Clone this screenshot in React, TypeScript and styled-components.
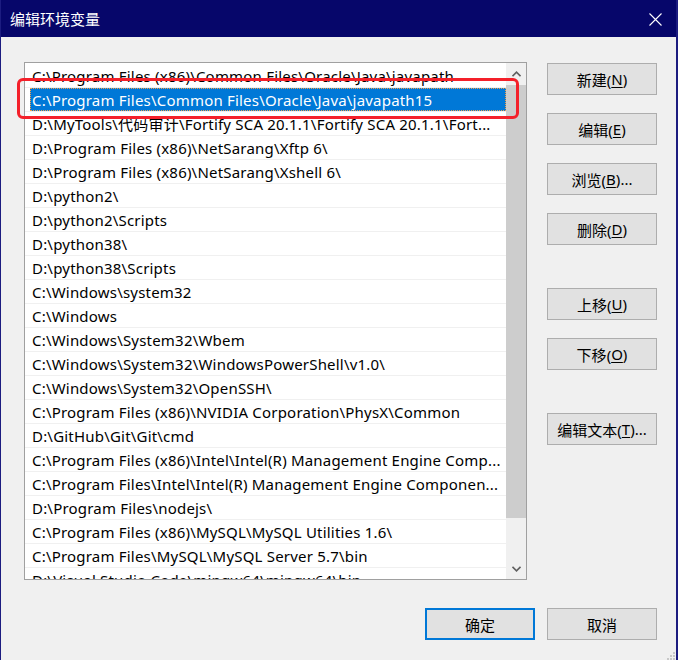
import React from "react";
import styled, { createGlobalStyle } from "styled-components";

const GlobalStyle = createGlobalStyle`
  html, body {
    margin: 0;
    padding: 0;
    background: #f0f0f0;
  }
  * {
    box-sizing: border-box;
  }
`;

const FONT = `"Noto Sans", "Noto Sans CJK SC", sans-serif`;

const paths = [
  "C:\\Program Files (x86)\\Common Files\\Oracle\\Java\\javapath",
  "C:\\Program Files\\Common Files\\Oracle\\Java\\javapath15",
  "D:\\MyTools\\代码审计\\Fortify SCA 20.1.1\\Fortify SCA 20.1.1\\Fort...",
  "D:\\Program Files (x86)\\NetSarang\\Xftp 6\\",
  "D:\\Program Files (x86)\\NetSarang\\Xshell 6\\",
  "D:\\python2\\",
  "D:\\python2\\Scripts",
  "D:\\python38\\",
  "D:\\python38\\Scripts",
  "C:\\Windows\\system32",
  "C:\\Windows",
  "C:\\Windows\\System32\\Wbem",
  "C:\\Windows\\System32\\WindowsPowerShell\\v1.0\\",
  "C:\\Windows\\System32\\OpenSSH\\",
  "C:\\Program Files (x86)\\NVIDIA Corporation\\PhysX\\Common",
  "D:\\GitHub\\Git\\Git\\cmd",
  "C:\\Program Files (x86)\\Intel\\Intel(R) Management Engine Comp...",
  "C:\\Program Files\\Intel\\Intel(R) Management Engine Componen...",
  "D:\\Program Files\\nodejs\\",
  "C:\\Program Files (x86)\\MySQL\\MySQL Utilities 1.6\\",
  "C:\\Program Files\\MySQL\\MySQL Server 5.7\\bin",
  "D:\\Visual Studio Code\\mingw64\\mingw64\\bin",
];

const SELECTED = 1;

const sideButtons = [
  { label: "新建", key: "N", gap: 0 },
  { label: "编辑", key: "E", gap: 18 },
  { label: "浏览", key: "B", gap: 18, dots: true },
  { label: "删除", key: "D", gap: 18 },
  { label: "上移", key: "U", gap: 43 },
  { label: "下移", key: "O", gap: 18 },
  { label: "编辑文本", key: "T", gap: 43, dots: true },
];

const Window = styled.div`
  position: relative;
  width: 678px;
  height: 660px;
  display: flex;
  flex-direction: column;
  background: #f0f0f0;
  border-left: 1px solid #1c1c80;
  border-right: 2px solid #1c1c80;
  font-family: ${FONT};
  overflow: hidden;
`;

const TitleBar = styled.div`
  height: 37px;
  flex: none;
  display: flex;
  align-items: center;
  justify-content: space-between;
  padding: 0 14px 0 9px;
  background: #06066a;
  color: #ffffff;
  font-size: 15px;
`;

const CloseIcon = styled.svg`
  width: 13px;
  height: 13px;
  margin-top: 1px;
`;

const Body = styled.div`
  display: flex;
  gap: 20px;
  padding: 25px 0 0 23px;
`;

const ListBox = styled.div`
  width: 503px;
  height: 518px;
  flex: none;
  display: flex;
  border: 1px solid #a0a0a0;
  background: #ffffff;
`;

const Rows = styled.div`
  flex: 1;
  overflow: hidden;
  padding-top: 1px;
`;

const Row = styled.div`
  height: 24px;
  display: flex;
  align-items: stretch;
  padding: 0 0 0 5px;
  border-bottom: 1px solid #f0f0f0;
`;

const Label = styled.div<{ $selected?: boolean }>`
  flex: 1;
  display: flex;
  align-items: center;
  padding-left: 2px;
  font-size: 15px;
  letter-spacing: 0.2px;
  white-space: nowrap;
  overflow: hidden;
  color: ${(p) => (p.$selected ? "#ffffff" : "#000000")};
  background: ${(p) => (p.$selected ? "#0078d7" : "transparent")};
  outline: ${(p) => (p.$selected ? "1px dotted #f5a04a" : "none")};
  outline-offset: -1px;
`;

const ScrollBar = styled.div`
  width: 20px;
  flex: none;
  display: flex;
  flex-direction: column;
  background: #f0f0f0;
`;

const Arrow = styled.div`
  height: 21px;
  flex: none;
  display: flex;
  align-items: center;
  justify-content: center;
`;

const Track = styled.div`
  flex: 1;
  padding-top: 1px;
`;

const Thumb = styled.div`
  height: 433px;
  background: #cdcdcd;
`;

const ButtonColumn = styled.div`
  display: flex;
  flex-direction: column;
  padding-top: 1px;
`;

const Button = styled.button<{ $gap?: number; $default?: boolean }>`
  width: 110px;
  height: 32px;
  margin-top: ${(p) => p.$gap ?? 0}px;
  display: flex;
  align-items: center;
  justify-content: center;
  padding: 0;
  background: #e1e1e1;
  border: ${(p) => (p.$default ? "2px solid #0078d7" : "1px solid #adadad")};
  border-radius: 0;
  font-family: ${FONT};
  font-size: 15px;
  color: #000000;
`;

const Mnemonic = styled.span`
  text-decoration: underline;
  text-underline-offset: 2px;
`;

const Footer = styled.div`
  display: flex;
  justify-content: flex-end;
  gap: 12px;
  padding: 28px 19px 0 0;
`;

const Annotation = styled.div`
  position: absolute;
  left: 16px;
  top: 78px;
  width: 502px;
  height: 41px;
  border: 3px solid #f4202a;
  border-radius: 6px;
  pointer-events: none;
`;

const Grip = styled.svg`
  position: absolute;
  right: 1px;
  bottom: 0;
  width: 10px;
  height: 10px;
`;

const Chevron: React.FC<{ down?: boolean }> = ({ down }) => (
  <svg width="9" height="6" viewBox="0 0 9 6">
    <polyline
      points={down ? "0.5,0.8 4.5,4.8 8.5,0.8" : "0.5,5.2 4.5,1.2 8.5,5.2"}
      fill="none"
      stroke="#606060"
      strokeWidth="1.6"
    />
  </svg>
);

export default function App() {
  return (
    <>
      <GlobalStyle />
      <Window>
        <TitleBar>
          <span>编辑环境变量</span>
          <CloseIcon viewBox="0 0 13 13">
            <path d="M0.5 0.5 L12.5 12.5 M12.5 0.5 L0.5 12.5" stroke="#ffffff" strokeWidth="1.1" />
          </CloseIcon>
        </TitleBar>
        <Body>
          <ListBox>
            <Rows>
              {paths.map((p, i) => (
                <Row key={i}>
                  <Label $selected={i === SELECTED}>{p}</Label>
                </Row>
              ))}
            </Rows>
            <ScrollBar>
              <Arrow>
                <Chevron />
              </Arrow>
              <Track>
                <Thumb />
              </Track>
              <Arrow>
                <Chevron down />
              </Arrow>
            </ScrollBar>
          </ListBox>
          <ButtonColumn>
            {sideButtons.map((b) => (
              <Button key={b.key} $gap={b.gap}>
                {b.label}(<Mnemonic>{b.key}</Mnemonic>){b.dots ? "..." : ""}
              </Button>
            ))}
          </ButtonColumn>
        </Body>
        <Footer>
          <Button $default>确定</Button>
          <Button>取消</Button>
        </Footer>
        <Annotation />
        <Grip viewBox="0 0 10 10">
          {[
            [8, 2],
            [8, 5],
            [5, 5],
            [8, 8],
            [5, 8],
            [2, 8],
          ].map(([x, y], i) => (
            <rect key={i} x={x} y={y} width="2" height="2" fill="#c8c8c8" />
          ))}
        </Grip>
      </Window>
    </>
  );
}
